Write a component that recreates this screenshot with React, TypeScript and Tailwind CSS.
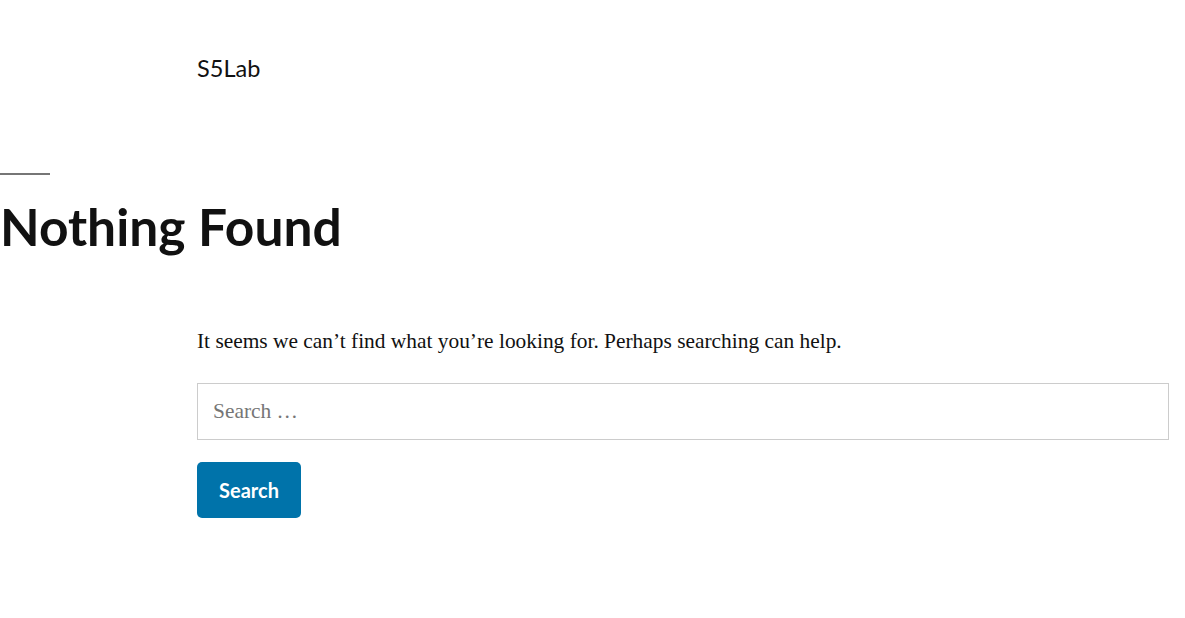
export default function App() {
  return (
    <div className="min-h-[618px] bg-white text-[#111]">
      <header className="pl-[197px] pt-[52px]">
        <p className="font-['Lato',sans-serif] text-[23.5px] leading-[32px]">S5Lab</p>
      </header>

      <main className="mt-[89px]">
        <div className="h-[2px] w-[50px] bg-[#767676]" />
        <h1 className="mt-[21px] font-['Lato',sans-serif] text-[51.5px] font-bold leading-[1.2]">
          Nothing Found
        </h1>

        <div className="mt-[65px] pl-[197px] pr-[16px]">
          <p className="font-['Liberation_Serif',serif] text-[21.4px] leading-[36px]">
            It seems we can’t find what you’re looking for. Perhaps searching can help.
          </p>

          <form className="mt-[24px] flex flex-col items-start gap-[22px]" onSubmit={(e) => e.preventDefault()}>
            <input
              type="search"
              placeholder="Search …"
              className="h-[57px] w-full border border-[#ccc] px-[15px] font-['Liberation_Serif',serif] text-[21.4px] text-[#111] outline-none placeholder:text-[#767676]"
            />
            <button
              type="submit"
              className="h-[56px] w-[104px] rounded-[5px] bg-[#0073aa] font-['Lato',sans-serif] text-[20px] font-bold text-white"
            >
              Search
            </button>
          </form>
        </div>
      </main>
    </div>
  );
}
